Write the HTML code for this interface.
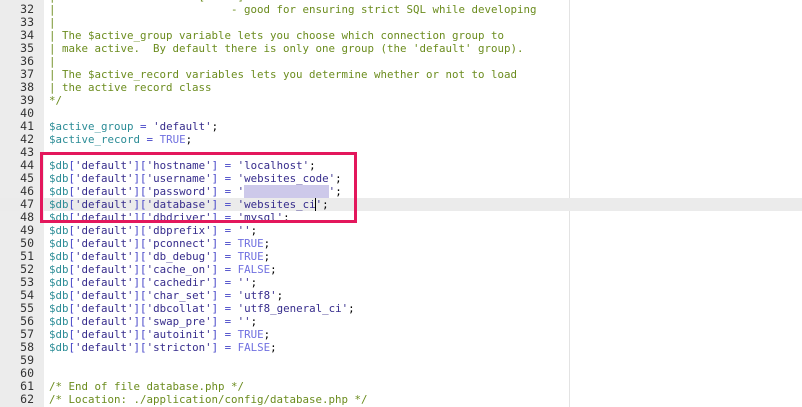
<!DOCTYPE html>
<html><head><meta charset="utf-8"><style>
body{margin:0;width:802px;height:407px;overflow:hidden;background:#fff;font-family:"DejaVu Sans Mono","Liberation Mono",monospace;font-size:10.8px;}
#g{position:absolute;left:0;top:0;width:44px;height:407px;background:#ececec;}
#v{position:absolute;left:569px;top:0;width:1px;height:407px;background:#e3e3e3;}
.l{position:absolute;left:0;height:13px;line-height:13px;white-space:pre;width:802px;}
.n{position:absolute;left:0;width:34px;text-align:right;color:#333;font-size:11.5px;}
.c{position:absolute;left:49px;}
.cm{color:#6b8c1e}.s{color:#362c8c}.b{color:#4545c8}.v{color:#2b8c96}.k{color:#7070e0}
.hl{background:#ebebeb}
#box{position:absolute;left:40px;top:152px;width:311px;height:65px;border:3px solid #e3175c;}
</style></head><body>
<div id="g"></div><div id="v"></div>
<div class="l" style="top:-10px"><span class="n">31</span><span class="c cm">|                      ['...'] ...</span></div>
<div class="l" style="top:3px"><span class="n">32</span><span class="c cm">|                           - good for ensuring strict SQL while developing</span></div>
<div class="l" style="top:16px"><span class="n">33</span><span class="c cm">|</span></div>
<div class="l" style="top:29px"><span class="n">34</span><span class="c cm">| The $active_group variable lets you choose which connection group to</span></div>
<div class="l" style="top:42px"><span class="n">35</span><span class="c cm">| make active.  By default there is only one group (the 'default' group).</span></div>
<div class="l" style="top:55px"><span class="n">36</span><span class="c cm">|</span></div>
<div class="l" style="top:68px"><span class="n">37</span><span class="c cm">| The $active_record variables lets you determine whether or not to load</span></div>
<div class="l" style="top:81px"><span class="n">38</span><span class="c cm">| the active record class</span></div>
<div class="l" style="top:94px"><span class="n">39</span><span class="c cm">*/</span></div>
<div class="l" style="top:107px"><span class="n">40</span></div>
<div class="l" style="top:120px"><span class="n">41</span><span class="c"><span class="v">$active_group</span> <span class="b">=</span> <span class="s">'default'</span>;</span></div>
<div class="l" style="top:133px"><span class="n">42</span><span class="c"><span class="v">$active_record</span> <span class="b">=</span> <span class="k">TRUE</span>;</span></div>
<div class="l" style="top:146px"><span class="n">43</span></div>
<div class="l" style="top:159px"><span class="n">44</span><span class="c"><span class="v">$db</span><span class="b">[</span><span class="s">'default'</span><span class="b">][</span><span class="s">'hostname'</span><span class="b">]</span> <span class="b">=</span> <span class="s">'localhost'</span>;</span></div>
<div class="l" style="top:172px"><span class="n">45</span><span class="c"><span class="v">$db</span><span class="b">[</span><span class="s">'default'</span><span class="b">][</span><span class="s">'username'</span><span class="b">]</span> <span class="b">=</span> <span class="s">'websites_code'</span>;</span></div>
<div class="l" style="top:185px"><span class="n">46</span><span class="c"><span class="v">$db</span><span class="b">[</span><span class="s">'default'</span><span class="b">][</span><span class="s">'password'</span><span class="b">]</span> <span class="b">=</span> <span class="s">'<span style="background:#cdc9ea;color:#cdc9ea">xxxxxxxxxxxxx</span>'</span>;</span></div>
<div class="l hl" style="top:198px;left:0;width:802px"></div>
<div class="l" style="top:198px"><span class="n">47</span><span class="c"><span class="v">$db</span><span class="b">[</span><span class="s">'default'</span><span class="b">][</span><span class="s">'database'</span><span class="b">]</span> <span class="b">=</span> <span class="s">'websites_ci<span style="border-left:1.5px solid #000;margin-left:-1px">'</span></span>;</span></div>
<div class="l" style="top:211px"><span class="n">48</span><span class="c"><span class="v">$db</span><span class="b">[</span><span class="s">'default'</span><span class="b">][</span><span class="s">'dbdriver'</span><span class="b">]</span> <span class="b">=</span> <span class="s">'mysql'</span>;</span></div>
<div class="l" style="top:224px"><span class="n">49</span><span class="c"><span class="v">$db</span><span class="b">[</span><span class="s">'default'</span><span class="b">][</span><span class="s">'dbprefix'</span><span class="b">]</span> <span class="b">=</span> <span class="s">''</span>;</span></div>
<div class="l" style="top:237px"><span class="n">50</span><span class="c"><span class="v">$db</span><span class="b">[</span><span class="s">'default'</span><span class="b">][</span><span class="s">'pconnect'</span><span class="b">]</span> <span class="b">=</span> <span class="k">TRUE</span>;</span></div>
<div class="l" style="top:250px"><span class="n">51</span><span class="c"><span class="v">$db</span><span class="b">[</span><span class="s">'default'</span><span class="b">][</span><span class="s">'db_debug'</span><span class="b">]</span> <span class="b">=</span> <span class="k">TRUE</span>;</span></div>
<div class="l" style="top:263px"><span class="n">52</span><span class="c"><span class="v">$db</span><span class="b">[</span><span class="s">'default'</span><span class="b">][</span><span class="s">'cache_on'</span><span class="b">]</span> <span class="b">=</span> <span class="k">FALSE</span>;</span></div>
<div class="l" style="top:276px"><span class="n">53</span><span class="c"><span class="v">$db</span><span class="b">[</span><span class="s">'default'</span><span class="b">][</span><span class="s">'cachedir'</span><span class="b">]</span> <span class="b">=</span> <span class="s">''</span>;</span></div>
<div class="l" style="top:289px"><span class="n">54</span><span class="c"><span class="v">$db</span><span class="b">[</span><span class="s">'default'</span><span class="b">][</span><span class="s">'char_set'</span><span class="b">]</span> <span class="b">=</span> <span class="s">'utf8'</span>;</span></div>
<div class="l" style="top:302px"><span class="n">55</span><span class="c"><span class="v">$db</span><span class="b">[</span><span class="s">'default'</span><span class="b">][</span><span class="s">'dbcollat'</span><span class="b">]</span> <span class="b">=</span> <span class="s">'utf8_general_ci'</span>;</span></div>
<div class="l" style="top:315px"><span class="n">56</span><span class="c"><span class="v">$db</span><span class="b">[</span><span class="s">'default'</span><span class="b">][</span><span class="s">'swap_pre'</span><span class="b">]</span> <span class="b">=</span> <span class="s">''</span>;</span></div>
<div class="l" style="top:328px"><span class="n">57</span><span class="c"><span class="v">$db</span><span class="b">[</span><span class="s">'default'</span><span class="b">][</span><span class="s">'autoinit'</span><span class="b">]</span> <span class="b">=</span> <span class="k">TRUE</span>;</span></div>
<div class="l" style="top:341px"><span class="n">58</span><span class="c"><span class="v">$db</span><span class="b">[</span><span class="s">'default'</span><span class="b">][</span><span class="s">'stricton'</span><span class="b">]</span> <span class="b">=</span> <span class="k">FALSE</span>;</span></div>
<div class="l" style="top:354px"><span class="n">59</span></div>
<div class="l" style="top:367px"><span class="n">60</span></div>
<div class="l" style="top:380px"><span class="n">61</span><span class="c cm">/* End of file database.php */</span></div>
<div class="l" style="top:393px"><span class="n">62</span><span class="c cm">/* Location: ./application/config/database.php */</span></div>
<div id="box"></div>
</body></html>
